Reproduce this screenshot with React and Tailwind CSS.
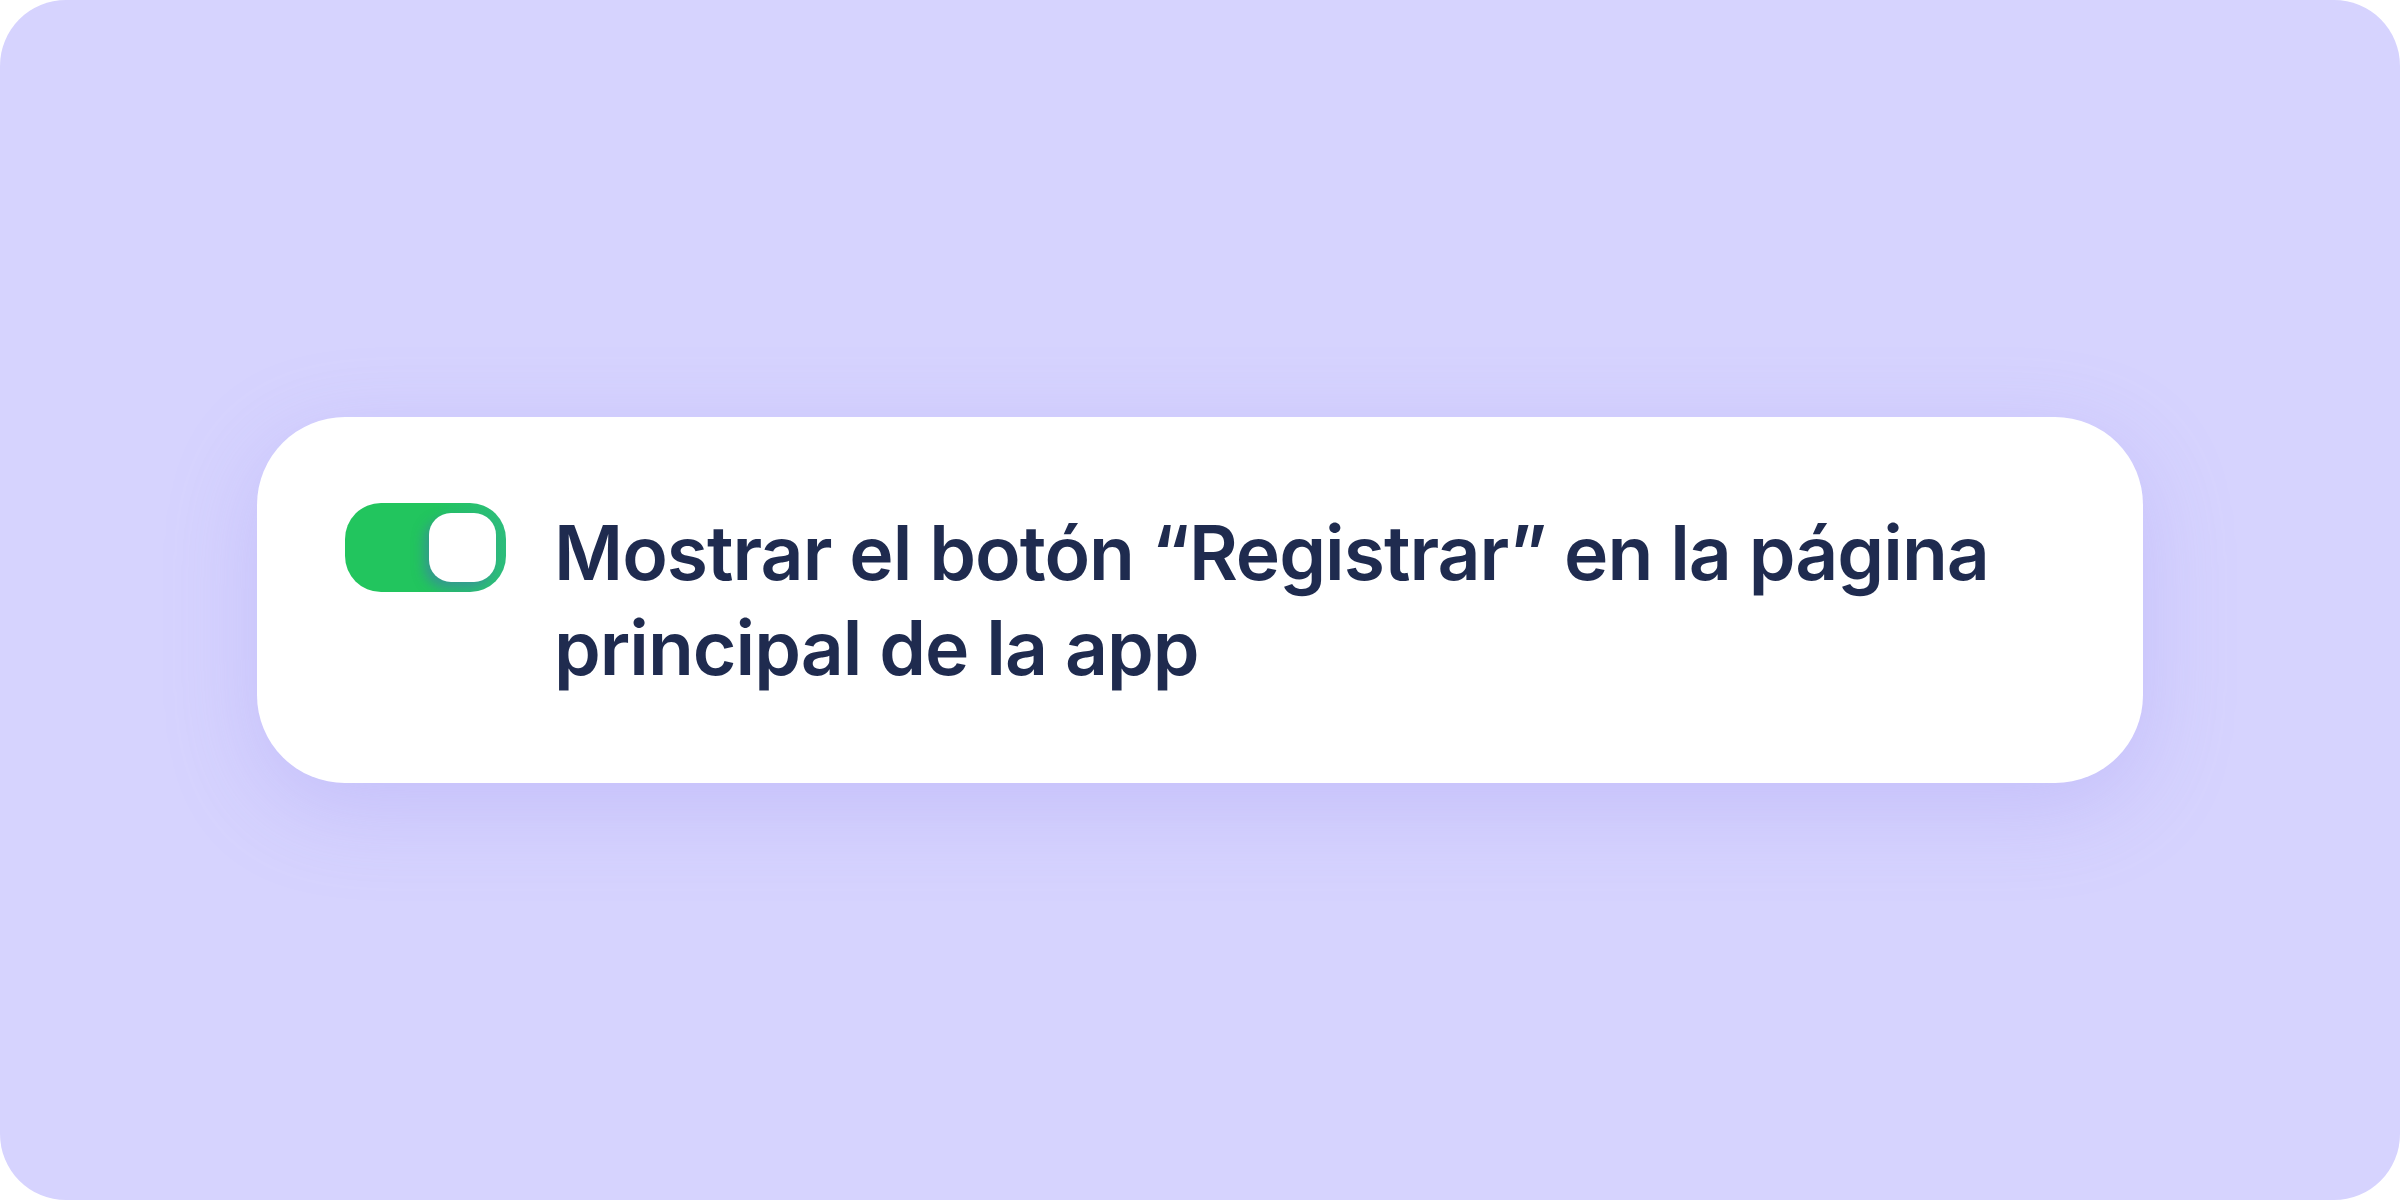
export default function App() {
  return (
    <div className="w-[2400px] h-[1200px] bg-white">
      <div className="w-full h-full rounded-[66px] bg-[#d6d3fe] flex items-center justify-center">
        <div className="w-[1886px] bg-white rounded-[88px] p-[88px] flex items-start gap-[48px] shadow-[0_24px_90px_rgba(150,140,240,0.28)]">
          <div className="shrink-0 mt-[-2px] w-[161px] h-[89px] rounded-[36px] bg-[linear-gradient(90deg,#22c55e_0%,#22c55e_55%,#2dbd7c_100%)] p-[10px] flex justify-end overflow-hidden">
            <div className="w-[67px] h-[69px] rounded-[22px] bg-white shadow-[-5px_6px_12px_rgba(70,110,190,0.5)]"></div>
          </div>
          <p className="text-[75px] leading-[95px] font-semibold text-[#1f2b4f] tracking-[-1px]" style={{ fontFamily: "Inter, 'Noto Sans', sans-serif" }}>
            Mostrar el botón “Registrar” en la página
            <br />
            principal de la app
          </p>
        </div>
      </div>
    </div>
  );
}
